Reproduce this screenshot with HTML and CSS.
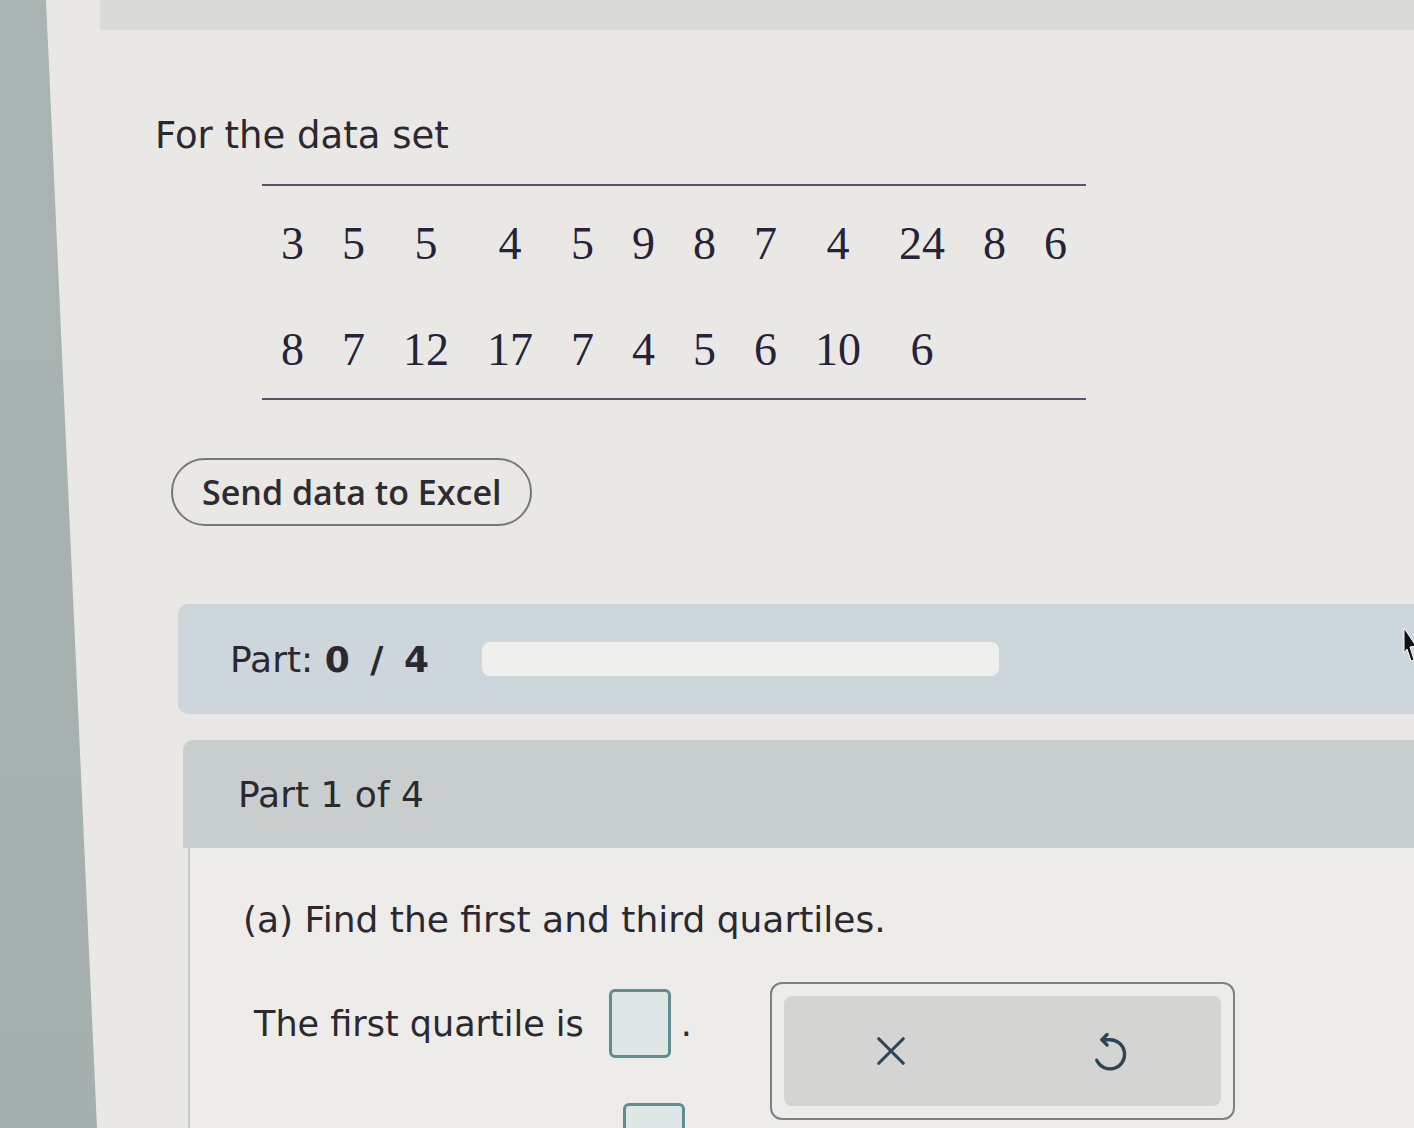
FILE: index.html
```html
<!DOCTYPE html>
<html>
<head>
<title>Quartiles</title>
<link rel="stylesheet" href="styles.css">
</head>
<body>

<div class="screen">
	<aside class="side"></aside>

	<main class="page">
		<div class="topstrip"></div>

		<p class="intro">For the data set</p>

		<table class="dataset">
			<tr>
				<td>3</td><td>5</td><td>5</td><td>4</td><td>5</td><td>9</td>
				<td>8</td><td>7</td><td>4</td><td>24</td><td>8</td><td>6</td>
			</tr>
			<tr>
				<td>8</td><td>7</td><td>12</td><td>17</td><td>7</td><td>4</td>
				<td>5</td><td>6</td><td>10</td><td>6</td><td></td><td></td>
			</tr>
		</table>

		<div class="excelrow">
			<button type="button" class="excel">Send data to Excel</button>
		</div>

		<div class="progress">
			<span>Part: <b>0 / 4</b></span>
			<div class="track"></div>
		</div>

		<section class="part">
			<div class="parthead">Part 1 of 4</div>
			<div class="partbody">
				<p class="prompt">(a) Find the first and third quartiles.</p>

				<div class="answers">
					<div class="answerrows">
						<div class="answer"><span class="label">The first quartile is</span><span class="box"></span><span class="dot">.</span></div>
						<!-- third quartile row is below the fold, only its box top shows -->
						<div class="answer next"><span class="box" aria-label="The third quartile is"></span></div>
					</div>

					<div class="tools">
						<div class="toolsinner">
							<button type="button" class="tool" title="Clear">
								<svg width="42" height="42" viewBox="0 0 24 24" fill="none" stroke="#2d4657" stroke-width="1.8" stroke-linecap="round">
									<path d="M5 5 L19 19 M19 5 L5 19"/>
								</svg>
							</button>
							<button type="button" class="tool" title="Undo">
								<svg width="50" height="50" viewBox="0 0 24 24" fill="none" stroke="#2d4657" stroke-width="1.6" stroke-linecap="round" stroke-linejoin="round">
									<path d="M8.2 6.6 H12.2 A7 7 0 1 1 5.6 16.4"/>
									<path d="M10.6 4.1 L8.1 6.6 L10.6 9.1"/>
								</svg>
							</button>
						</div>
					</div>
				</div>
			</div>
		</section>
	</main>
</div>

<svg class="cursor" width="14" height="40" viewBox="0 0 14 40">
	<path d="M1 2 L13 20 L7 21 L11 34 L8 35 L4 23 L1 27 Z" fill="#111" stroke="#fff" stroke-width="1"/>
</svg>

</body>
</html>
```

FILE: styles.css
```css
body {
  margin: 0;
  height: 1128px;
  overflow: hidden;
  background-color: #e9e8e5;
  font-family: "DejaVu Sans", Verdana, sans-serif;
  color: #2b2830;
}

.screen {
  display: flex;
  height: 1128px;
}

.side {
  flex: none;
  width: 100px;
  height: 100%;
  background: linear-gradient(to bottom, #aab4b3, #a5afae);
  clip-path: polygon(0 0, 46px 0, 97px 100%, 0 100%);
}

.page {
  flex: 1;
  min-width: 0;
}

.topstrip {
  height: 30px;
  background-color: #dadad7;
}

.intro {
  margin: 84px 0 0 55px;
  font-size: 37px;
  line-height: 44px;
}

/* data table */

.dataset {
  margin: 26px 0 0 162px;
  border-collapse: collapse;
  border-top: 2px solid #55526a;
  border-bottom: 2px solid #55526a;
}

.dataset td {
  padding: 42px 19px 32px;
  font-family: "Liberation Serif", "Times New Roman", serif;
  font-size: 46px;
  line-height: 32px;
  text-align: center;
  color: #26223a;
}

.excelrow {
  margin: 58px 0 0 71px;
}

.excel {
  height: 68px;
  padding: 0 29px;
  border: 2px solid #77787a;
  border-radius: 34px;
  background: transparent;
  font-family: "Open Sans", sans-serif;
  font-weight: 600;
  font-size: 34px;
  color: #2e2b31;
}

/* progress bar */

.progress {
  display: flex;
  align-items: center;
  height: 110px;
  margin: 78px 0 0 78px;
  padding-left: 52px;
  background-color: #cdd7db;
  border-radius: 10px 0 0 10px;
  font-size: 36px;
}

.progress b {
  word-spacing: 8px;
}

.track {
  width: 517px;
  height: 34px;
  margin-left: 53px;
  background-color: #efefed;
  border-radius: 8px;
}

/* part */

.part {
  margin: 26px 0 0 83px;
}

.parthead {
  display: flex;
  align-items: center;
  height: 108px;
  padding-left: 55px;
  background-color: #c8cecd;
  border-radius: 10px 0 0 0;
  font-size: 36px;
}

.partbody {
  margin-left: 5px;
  height: 400px;
  padding: 50px 0 0 53px;
  border-left: 2px solid #c6c9c7;
  background-color: #edece9;
}

.prompt {
  margin: 0;
  font-size: 36px;
  line-height: 44px;
}

.answers {
  display: flex;
  align-items: flex-start;
  gap: 78px;
  margin-top: 40px;
}

.answerrows {
  display: flex;
  flex-direction: column;
  gap: 45px;
  padding: 7px 0 0 11px;
}

.answer {
  display: flex;
  align-items: center;
  font-size: 35px;
  line-height: 44px;
  white-space: nowrap;
}

.answer.next {
  padding-left: 344px;
}

.box {
  box-sizing: border-box;
  width: 62px;
  height: 69px;
  margin-left: 25px;
  border: 3px solid #5e8e92;
  border-radius: 6px;
  background-color: #dfe7e6;
}

.dot {
  margin-left: 10px;
}

/* clear / undo */

.tools {
  box-sizing: border-box;
  width: 465px;
  height: 138px;
  padding: 12px;
  border: 2px solid #7c7f86;
  border-radius: 12px;
}

.toolsinner {
  display: flex;
  justify-content: space-around;
  align-items: center;
  height: 100%;
  background-color: #d4d5d2;
  border-radius: 8px;
}

.tool {
  display: flex;
  padding: 0;
  border: none;
  background: transparent;
}

.cursor {
  position: absolute;
  left: 1403px;
  top: 626px;
}
```
